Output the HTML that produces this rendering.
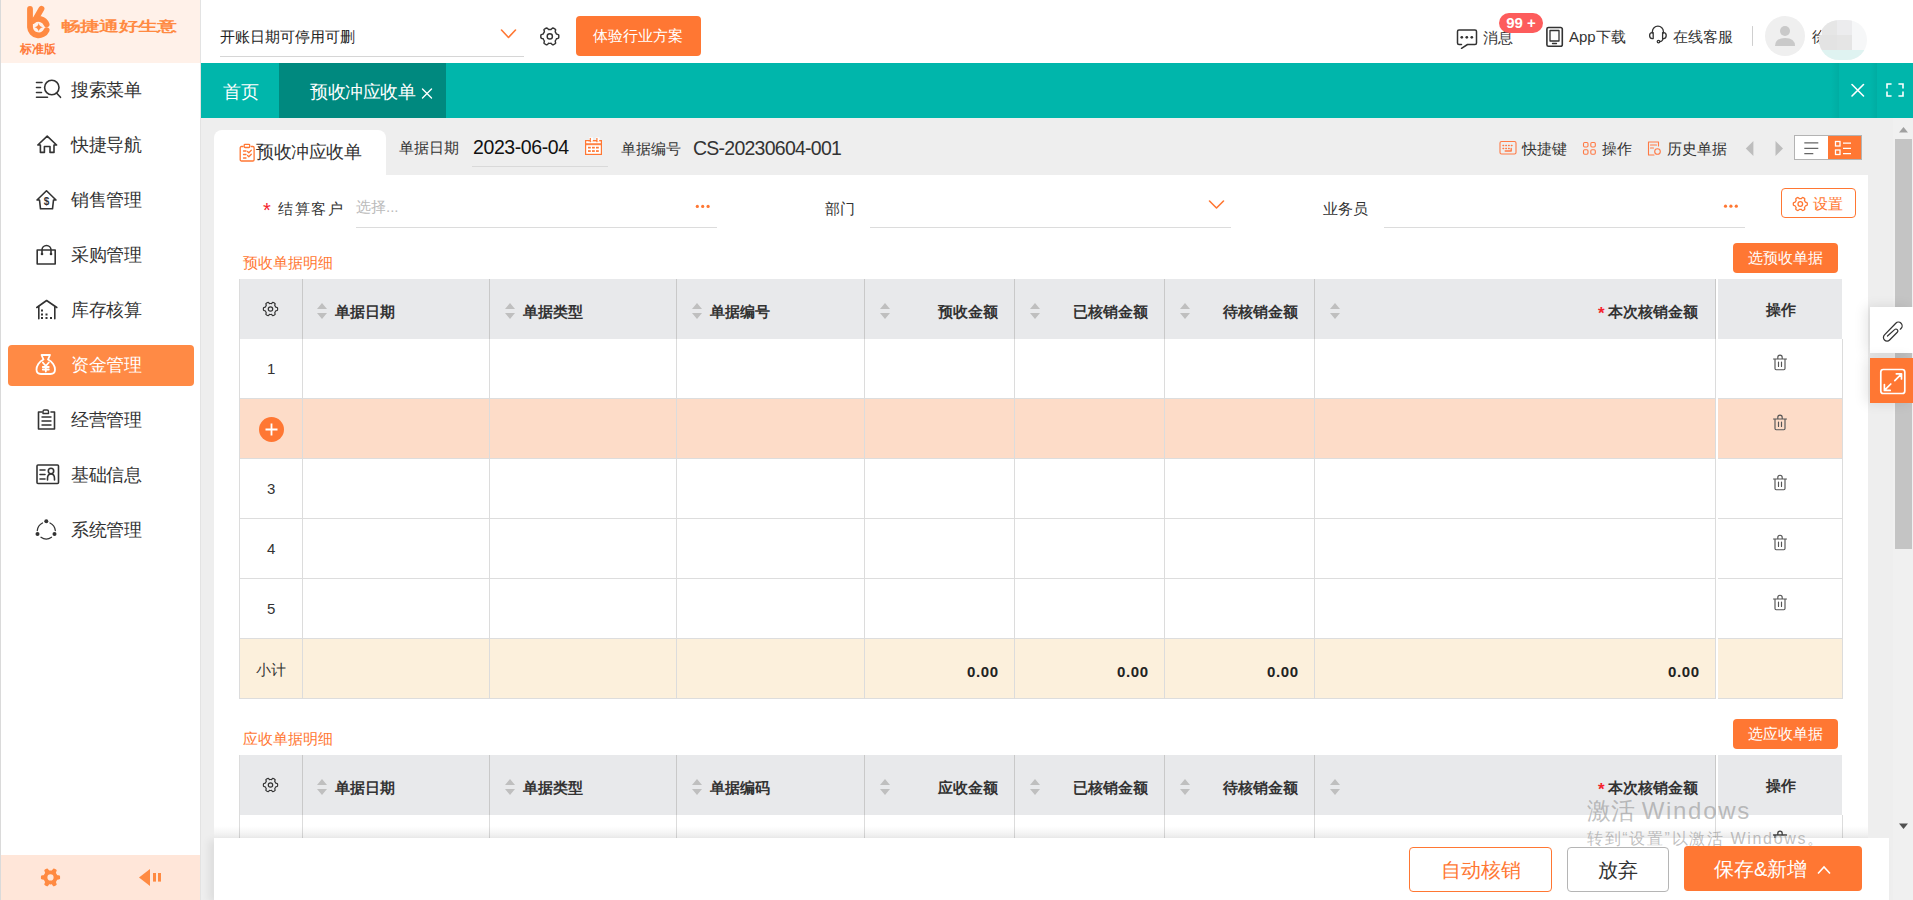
<!DOCTYPE html><html><head><meta charset="utf-8"><style>
*{box-sizing:border-box;margin:0;padding:0}
html,body{width:1913px;height:900px;overflow:hidden}
body{position:relative;background:#eeeeee;font-family:"Liberation Sans",sans-serif;color:#333;}
.a{position:absolute;white-space:nowrap}
svg.i{position:absolute;overflow:visible}
.mi{position:absolute;left:71px;font-size:18px;line-height:20px;color:#333;letter-spacing:-0.5px;white-space:nowrap}
.t15{font-size:15px;line-height:20px}
.th{position:absolute;font-size:15px;line-height:20px;font-weight:bold;color:#333;white-space:nowrap}
.vl{position:absolute;width:1px;background:#dddddd}
.hl{position:absolute;height:1px;background:#dddddd}
</style></head><body>
<div class="a" style="left:0;top:0;width:201px;height:900px;background:#fff;border-right:1px solid #e3e3e3;border-left:1px solid #dadada"></div>
<div class="a" style="left:1px;top:0;width:199px;height:63px;background:#fff1e9"></div>
<svg class="i" style="left:0;top:0" width="200" height="63" viewBox="0 0 200 63" fill="none" stroke="#ff8a42" stroke-width="5.8" stroke-linecap="round" stroke-linejoin="round">
<path d="M30 9 V27.3 A8.7 8.7 0 0 0 46.6 30.2"/>
<path d="M41.5 8.8 L36 18.3"/>
<path d="M32.8 21 A8.7 8.7 0 0 1 46.6 24.4"/>
<path d="M38.7 23 Q39.3 26.7 43 27.3 Q39.3 27.9 38.7 31.6 Q38.1 27.9 34.4 27.3 Q38.1 26.7 38.7 23Z" fill="#ff8a42" stroke="none"/>
</svg>
<div class="a" style="left:61px;top:17px;font-size:15px;line-height:20px;font-weight:bold;color:#ff8a42;transform:scale(1.28,0.9);transform-origin:0 0">畅捷通好生意</div>
<div class="a" style="left:20px;top:41px;font-size:12px;line-height:16px;font-weight:bold;color:#ff7a3a">标准版</div>
<div class="a" style="left:8px;top:345px;width:186px;height:41px;border-radius:4px;background:#ff8a45;overflow:hidden"><div class="a" style="left:-225px;top:-255.6px;width:400px;height:400px;border-radius:200px;background:radial-gradient(circle at center,rgba(255,255,255,0) 82%,rgba(255,255,255,0.22) 100%)"></div></div>
<div class="mi" style="top:80px;color:#333">搜索菜单</div>
<div class="mi" style="top:135px;color:#333">快捷导航</div>
<div class="mi" style="top:190px;color:#333">销售管理</div>
<div class="mi" style="top:245px;color:#333">采购管理</div>
<div class="mi" style="top:300px;color:#333">库存核算</div>
<div class="mi" style="top:355px;color:#fff">资金管理</div>
<div class="mi" style="top:410px;color:#333">经营管理</div>
<div class="mi" style="top:465px;color:#333">基础信息</div>
<div class="mi" style="top:520px;color:#333">系统管理</div>

<svg class="i" style="left:0;top:0" width="200" height="600" viewBox="0 0 200 600" fill="none" stroke="#333" stroke-width="1.6" stroke-linecap="round" stroke-linejoin="round">
 <path d="M36.5 82.5h5.5M36.5 87.5h4M36.5 92.5h5M36.5 97.2h11"/>
 <circle cx="51.8" cy="87.5" r="7.2"/><path d="M56.5 93l4 4.3"/>
 <path d="M37.8 145 L47.2 136.2 L56.6 145 L54 145 L54 152.4 L50 152.4 L50 146.5 L44.4 146.5 L44.4 152.4 L40.4 152.4 L40.4 145 Z"/>
 <path d="M37 200 L46.5 190.8 L56 200 L53.5 200 L52.5 208.8 L40.5 208.8 L39.5 200 Z"/>
 <path d="M37.2 250 h18 v14 h-18 Z"/><path d="M42 254 v-4 a4.5 4.5 0 0 1 9 0 v4"/>
 <path d="M36.8 307.5 L46.6 300.5 L56.8 307.5"/><path d="M38.8 306.5 V318.8 M54.8 306.5 V318.8"/>
 <path d="M42 412 h-3.5 v17 h16 v-17 h-3.5"/><path d="M43 413.5 v-2 q0 -1.5 1.5 -1.5 h2.5 q1.5 0 1.5 1.5 v2 Z" stroke-width="1.4"/><path d="M42 417h9 M42 421h9 M42 425h9" stroke-width="1.4"/>
 <rect x="37" y="465" width="21.5" height="18.5" rx="1"/><path d="M40 470h5M40 474.5h5M40 479h5"/><circle cx="51" cy="471" r="2.7"/><path d="M47.5 480 v-1.5 q0 -4.5 3.5 -4.5 q3.5 0 3.5 4.5 v1.5"/>
 <path d="M42.5 523 A9.5 9.5 0 0 0 37.3 530.5 M50 523 A9.5 9.5 0 0 1 55.3 530.5 M41 537.3 A9.5 9.5 0 0 0 51.5 537.3" stroke-width="1.3"/>
</svg>
<svg class="i" style="left:0;top:0" width="200" height="600" viewBox="0 0 200 600">
<text x="46.5" y="204.5" font-family="Liberation Sans" font-size="10" font-weight="bold" fill="#333" text-anchor="middle">$</text>
<circle cx="42" cy="254" r="1.3" fill="#333"/><circle cx="51" cy="254" r="1.3" fill="#333"/>
<g fill="#333"><rect x="41" y="309.5" width="2" height="2"/><rect x="41" y="313.5" width="2" height="2"/><rect x="45.5" y="313.5" width="2" height="2"/><rect x="41" y="317" width="2" height="2"/><rect x="45.5" y="317" width="2" height="2"/><rect x="50" y="317" width="2" height="2"/></g>
<g fill="#333"><circle cx="46.3" cy="521.2" r="2"/><circle cx="37.5" cy="534" r="2"/><circle cx="54.5" cy="534" r="2"/></g>
</svg>
<svg class="i" style="left:0;top:0" width="200" height="400" viewBox="0 0 200 400" fill="none" stroke="#fff" stroke-width="1.8" stroke-linecap="round" stroke-linejoin="round">
<path d="M41.5 355 h8.5 l-2 4.5 C52.5 361.5 55 366 55 369.5 C55 372.5 53 374 50.5 374 h-9.5 C38.5 374 36.5 372.5 36.5 369.5 C36.5 366 39 361.5 43.5 359.5 Z"/>
<path d="M42.8 362.5 l3 3.5 l3 -3.5 M45.8 366 v5.5 M42.8 367 h6 M42.8 369.5 h6"/>
</svg>
<div class="a" style="left:1px;top:855px;width:199px;height:45px;background:#ffe6d9"></div>
<svg class="i" style="left:0;top:0" width="200" height="900" viewBox="0 0 200 900">
<path fill="#ff8a42" fill-rule="evenodd" d="M60.10 877.40 L60.09 877.82 L60.06 878.24 L60.02 878.65 L59.95 879.07 L59.33 879.36 L58.52 879.55 L57.71 879.67 L57.08 879.79 L56.97 880.08 L56.84 880.36 L56.71 880.63 L56.56 880.90 L56.40 881.16 L56.23 881.42 L56.05 881.66 L55.86 881.90 L56.07 882.51 L56.37 883.27 L56.61 884.07 L56.67 884.75 L56.34 885.02 L56.01 885.26 L55.66 885.50 L55.30 885.71 L54.93 885.92 L54.56 886.10 L54.17 886.27 L53.78 886.42 L53.22 886.02 L52.65 885.42 L52.14 884.78 L51.72 884.29 L51.41 884.34 L51.11 884.37 L50.81 884.39 L50.50 884.40 L50.19 884.39 L49.89 884.37 L49.59 884.34 L49.28 884.29 L48.86 884.78 L48.35 885.42 L47.78 886.02 L47.22 886.42 L46.83 886.27 L46.44 886.10 L46.07 885.92 L45.70 885.71 L45.34 885.50 L44.99 885.26 L44.66 885.02 L44.33 884.75 L44.39 884.07 L44.63 883.27 L44.93 882.51 L45.14 881.90 L44.95 881.66 L44.77 881.42 L44.60 881.16 L44.44 880.90 L44.29 880.63 L44.16 880.36 L44.03 880.08 L43.92 879.79 L43.29 879.67 L42.48 879.55 L41.67 879.36 L41.05 879.07 L40.98 878.65 L40.94 878.24 L40.91 877.82 L40.90 877.40 L40.91 876.98 L40.94 876.56 L40.98 876.15 L41.05 875.73 L41.67 875.44 L42.48 875.25 L43.29 875.13 L43.92 875.01 L44.03 874.72 L44.16 874.44 L44.29 874.17 L44.44 873.90 L44.60 873.64 L44.77 873.38 L44.95 873.14 L45.14 872.90 L44.93 872.29 L44.63 871.53 L44.39 870.73 L44.33 870.05 L44.66 869.78 L44.99 869.54 L45.34 869.30 L45.70 869.09 L46.07 868.88 L46.44 868.70 L46.83 868.53 L47.22 868.38 L47.78 868.78 L48.35 869.38 L48.86 870.02 L49.28 870.51 L49.59 870.46 L49.89 870.43 L50.19 870.41 L50.50 870.40 L50.81 870.41 L51.11 870.43 L51.41 870.46 L51.72 870.51 L52.14 870.02 L52.65 869.38 L53.22 868.78 L53.78 868.38 L54.17 868.53 L54.56 868.70 L54.93 868.88 L55.30 869.09 L55.66 869.30 L56.01 869.54 L56.34 869.78 L56.67 870.05 L56.61 870.73 L56.37 871.53 L56.07 872.29 L55.86 872.90 L56.05 873.14 L56.23 873.38 L56.40 873.64 L56.56 873.90 L56.71 874.17 L56.84 874.44 L56.97 874.72 L57.08 875.01 L57.71 875.13 L58.52 875.25 L59.33 875.44 L59.95 875.73 L60.02 876.15 L60.06 876.56 L60.09 876.98 Z M53.6 877.4 A3.1 3.1 0 1 0 47.4 877.4 A3.1 3.1 0 1 0 53.6 877.4 Z"/>
<path fill="#ff8a42" d="M150 869 V886 L139 877.5 Z"/><rect x="153" y="873" width="3" height="8.6" fill="#ff8a42"/><rect x="158" y="873" width="3" height="8.6" fill="#ff8a42"/>
</svg>
<div class="a" style="left:201px;top:0;width:1712px;height:63px;background:#fff"></div>
<div class="a t15" style="left:220px;top:27px;color:#222">开账日期可停用可删</div>
<div class="a" style="left:220px;top:56px;width:304px;height:1px;background:#d6d6d6"></div>
<svg class="i" style="left:0;top:0" width="800" height="63" viewBox="0 0 800 63" fill="none" stroke-linecap="round" stroke-linejoin="round">
<path d="M501.5 30 L508.5 37.5 L515.5 30" stroke="#ff7733" stroke-width="1.6"/>
</svg>
<svg class="i" style="left:0;top:0" width="800" height="63" viewBox="0 0 800 63">
<path d="M558.80 36.40 L558.79 36.79 L558.77 37.18 L558.72 37.57 L558.66 37.96 L558.12 38.24 L557.53 38.47 L556.94 38.65 L556.38 38.79 L556.27 39.08 L556.14 39.36 L556.01 39.63 L555.86 39.90 L555.70 40.16 L555.53 40.42 L555.35 40.66 L555.16 40.90 L555.32 41.46 L555.46 42.06 L555.55 42.68 L555.59 43.29 L555.28 43.54 L554.96 43.77 L554.64 43.99 L554.30 44.19 L553.96 44.38 L553.60 44.56 L553.24 44.71 L552.88 44.86 L552.36 44.52 L551.87 44.13 L551.42 43.71 L551.02 43.29 L550.71 43.34 L550.41 43.37 L550.11 43.39 L549.80 43.40 L549.49 43.39 L549.19 43.37 L548.89 43.34 L548.58 43.29 L548.18 43.71 L547.73 44.13 L547.24 44.52 L546.72 44.86 L546.36 44.71 L546.00 44.56 L545.64 44.38 L545.30 44.19 L544.96 43.99 L544.64 43.77 L544.32 43.54 L544.01 43.29 L544.05 42.68 L544.14 42.06 L544.28 41.46 L544.44 40.90 L544.25 40.66 L544.07 40.42 L543.90 40.16 L543.74 39.90 L543.59 39.63 L543.46 39.36 L543.33 39.08 L543.22 38.79 L542.66 38.65 L542.07 38.47 L541.48 38.24 L540.94 37.96 L540.88 37.57 L540.83 37.18 L540.81 36.79 L540.80 36.40 L540.81 36.01 L540.83 35.62 L540.88 35.23 L540.94 34.84 L541.48 34.56 L542.07 34.33 L542.66 34.15 L543.22 34.01 L543.33 33.72 L543.46 33.44 L543.59 33.17 L543.74 32.90 L543.90 32.64 L544.07 32.38 L544.25 32.14 L544.44 31.90 L544.28 31.34 L544.14 30.74 L544.05 30.12 L544.01 29.51 L544.32 29.26 L544.64 29.03 L544.96 28.81 L545.30 28.61 L545.64 28.42 L546.00 28.24 L546.36 28.09 L546.72 27.94 L547.24 28.28 L547.73 28.67 L548.18 29.09 L548.58 29.51 L548.89 29.46 L549.19 29.43 L549.49 29.41 L549.80 29.40 L550.11 29.41 L550.41 29.43 L550.71 29.46 L551.02 29.51 L551.42 29.09 L551.87 28.67 L552.36 28.28 L552.88 27.94 L553.24 28.09 L553.60 28.24 L553.96 28.42 L554.30 28.61 L554.64 28.81 L554.96 29.03 L555.28 29.26 L555.59 29.51 L555.55 30.12 L555.46 30.74 L555.32 31.34 L555.16 31.90 L555.35 32.14 L555.53 32.38 L555.70 32.64 L555.86 32.90 L556.01 33.17 L556.14 33.44 L556.27 33.72 L556.38 34.01 L556.94 34.15 L557.53 34.33 L558.12 34.56 L558.66 34.84 L558.72 35.23 L558.77 35.62 L558.79 36.01 Z" fill="none" stroke="#333" stroke-width="1.45" stroke-linejoin="round"/>
<circle cx="549.8" cy="36.4" r="2.6" fill="none" stroke="#333" stroke-width="1.45"/>
</svg>
<div class="a" style="left:576px;top:16px;width:125px;height:40px;border-radius:4px;background:#ff7733"></div>
<div class="a t15" style="left:593px;top:26px;color:#fff">体验行业方案</div>
<svg class="i" style="left:0;top:0" width="1913" height="63" viewBox="0 0 1913 63" fill="none" stroke="#333" stroke-width="1.6" stroke-linecap="round" stroke-linejoin="round">
<path d="M1461.5 44.5 H1459 a1.5 1.5 0 0 1 -1.5 -1.5 V31.5 a1.5 1.5 0 0 1 1.5 -1.5 H1475 a1.5 1.5 0 0 1 1.5 1.5 V43 a1.5 1.5 0 0 1 -1.5 1.5 H1467.5 L1461.5 48.3" stroke-width="1.5"/>
<path d="M1548.5 27.5 h12.2 a1.6 1.6 0 0 1 1.6 1.6 v15.6 a1.6 1.6 0 0 1 -1.6 1.6 h-12.2 a1.6 1.6 0 0 1 -1.6 -1.6 v-15.6 a1.6 1.6 0 0 1 1.6 -1.6 Z"/>
<path d="M1550 30.5 h9 v10.5 h-9 Z" stroke-width="1.3"/><path d="M1552.5 43.5 h4" stroke-width="1.3"/>
<path d="M1652.4 33 V31.6 A5.5 5.5 0 0 1 1663.4 31.6 V33" stroke-width="1.3"/>
<path d="M1653.2 32.6 V38.6 H1652.2 a2.6 3 0 0 1 0 -6 Z" stroke-width="1.3"/><path d="M1662.6 32.6 V38.6 H1663.6 a2.6 3 0 0 0 0 -6 Z" stroke-width="1.3"/>
<path d="M1663 38.8 q-0.6 2.6 -3.2 2.9" stroke-width="1.3"/><circle cx="1658.5" cy="41.6" r="1.3" stroke-width="1.2"/>
<path d="M1752.5 26.5 v19" stroke="#cfcfcf" stroke-width="1"/>
</svg>
<svg class="i" style="left:0;top:0" width="1913" height="63" viewBox="0 0 1913 63" fill="#333">
<circle cx="1461.8" cy="37.3" r="1.35"/><circle cx="1466.8" cy="37.3" r="1.35"/><circle cx="1471.8" cy="37.3" r="1.35"/>

</svg>
<div class="a t15" style="left:1483px;top:28px;color:#333">消息</div>
<div class="a" style="left:1499px;top:13px;width:44px;height:20px;border-radius:10px;background:#fd5c5c;color:#fff;font-size:15px;line-height:20px;font-weight:bold;text-align:center">99 +</div>
<div class="a t15" style="left:1569px;top:27px;color:#333">App下载</div>
<div class="a t15" style="left:1673px;top:27px;color:#333">在线客服</div>
<div class="a" style="left:1765px;top:16px;width:40px;height:40px;border-radius:20px;background:#efefef"></div>
<svg class="i" style="left:0;top:0" width="1913" height="63" viewBox="0 0 1913 63" fill="#c9c9c9">
<circle cx="1785" cy="31" r="5"/><path d="M1775 46 q0 -8 10 -8 q10 0 10 8 Z"/>
</svg>
<div class="a t15" style="left:1812px;top:27px;color:#333">徐</div>
<div class="a" style="left:1819px;top:20px;width:48px;height:40px;border-radius:20px;overflow:hidden;background:#f6f7f8"><div class="a" style="left:3px;top:0;width:15px;height:15px;background:#e6e6e6"></div><div class="a" style="left:18px;top:0;width:15px;height:15px;background:#ececee"></div><div class="a" style="left:0;top:15px;width:18px;height:15px;background:#e3e3e3"></div><div class="a" style="left:18px;top:15px;width:15px;height:15px;background:#e5e5e5"></div><div class="a" style="left:0;top:30px;width:48px;height:10px;background:#dff3f1"></div></div>
<div class="a" style="left:201px;top:63px;width:1712px;height:55px;background:#00b6ab"></div>
<div class="a" style="left:279px;top:63px;width:167px;height:55px;background:#00897f"></div>
<div class="a" style="left:1831px;top:63px;width:8px;height:55px;background:linear-gradient(to right,rgba(0,0,0,0),rgba(0,0,0,0.05))"></div>
<div class="a" style="left:1870px;top:63px;width:7px;height:55px;background:linear-gradient(to right,rgba(0,0,0,0),rgba(0,0,0,0.05))"></div>
<div class="mi" style="left:223px;top:82px;color:#fff">首页</div>
<div class="mi" style="left:310px;top:82px;color:#fff">预收冲应收单</div>
<svg class="i" style="left:0;top:0" width="1913" height="130" viewBox="0 0 1913 130" fill="none" stroke="#fff" stroke-linecap="round">
<path d="M422.5 89 l9 9 M431.5 89 l-9 9" stroke-width="1.4"/>
<path d="M1852 84.5 l11.5 11.5 M1863.5 84.5 l-11.5 11.5" stroke-width="1.6"/>
<path d="M1887 88 v-4 h4 M1899 84 h4 v4 M1903 92 v4 h-4 M1891 96 h-4 v-4" stroke-width="1.6"/>
</svg>
<div class="a" style="left:214px;top:175px;width:1654px;height:725px;background:#fff"></div>
<div class="a" style="left:214px;top:130px;width:172px;height:46px;background:#fff;border-radius:8px 8px 0 0"></div>
<div class="mi" style="left:256px;top:142px;color:#333">预收冲应收单</div>
<svg class="i" style="left:0;top:0" width="1913" height="200" viewBox="0 0 1913 200" fill="none" stroke="#ff7733" stroke-width="1.3" stroke-linecap="round" stroke-linejoin="round">
<path d="M243 146.5 h-1.5 a1.3 1.3 0 0 0 -1.3 1.3 v11.9 a1.3 1.3 0 0 0 1.3 1.3 h11.3 a1.3 1.3 0 0 0 1.3 -1.3 v-11.9 a1.3 1.3 0 0 0 -1.3 -1.3 h-1.5"/>
<rect x="244.2" y="144.3" width="5.5" height="3.2" rx="0.8"/>
<path d="M243.5 151h2.5 M243.5 154.5h2.5 M243.5 158h2.5 M247.5 151.5 l1.3 1.2 l2.5 -2.5 M247.5 155.5 l1.3 1.2 l2.5 -2.5"/>
</svg>
<div class="a t15" style="left:399px;top:138px;color:#333">单据日期</div>
<div class="a" style="left:473px;top:136px;font-size:19.5px;line-height:22px;color:#111;letter-spacing:-0.4px">2023-06-04</div>
<div class="a" style="left:472px;top:166px;width:136px;height:1px;background:#d9d9d9"></div>
<svg class="i" style="left:0;top:0" width="1913" height="200" viewBox="0 0 1913 200">
<rect x="585.6" y="140.6" width="15.8" height="13.8" fill="#fff" stroke="#ff7733" stroke-width="1.2"/>
<rect x="586" y="143.2" width="15" height="2" fill="#ff7733" opacity="0.9"/>
<rect x="589" y="137.5" width="4" height="3.6" fill="#fff"/><rect x="595.6" y="137.5" width="4" height="3.6" fill="#fff"/>
<path d="M590.3 138 v4.2 M596.9 138 v4.2 M588 140.6 h2.3 M592.8 140.6 h4 M599.3 140.6 h2" stroke="#ff7733" stroke-width="1.2" fill="none"/>
<g fill="#ff7733"><rect x="588" y="146.8" width="2.8" height="1.7"/><rect x="592" y="146.8" width="2.8" height="1.7"/><rect x="596" y="146.8" width="2.8" height="1.7"/>
<rect x="588" y="150.2" width="2.8" height="1.7"/><rect x="592" y="150.2" width="2.8" height="1.7"/><rect x="596" y="150.2" width="2.8" height="1.7"/></g>
</svg>
<div class="a t15" style="left:621px;top:139px;color:#333">单据编号</div>
<div class="a" style="left:693px;top:137px;font-size:19.5px;line-height:22px;color:#333;letter-spacing:-0.75px">CS-20230604-001</div>
<svg class="i" style="left:0;top:0" width="1913" height="200" viewBox="0 0 1913 200" fill="none" stroke="#ff7a45" stroke-width="1.1" stroke-linecap="round" stroke-linejoin="round">
<rect x="1500" y="141.5" width="16" height="12.5" rx="1.5"/>
<path d="M1503 145.5h0.6 M1505.8 145.5h0.6 M1508.6 145.5h0.6 M1511.4 145.5h0.6 M1503 148.5h0.6 M1505.8 148.5h0.6 M1508.6 148.5h0.6 M1511.2 148.5 v2.5 h-6" stroke-width="1.4"/>
<rect x="1583.5" y="142.5" width="4.5" height="4.5" rx="1.2"/><rect x="1590.8" y="142.5" width="4.5" height="4.5" rx="1.2"/>
<rect x="1583.5" y="149.8" width="4.5" height="4.5" rx="1.2"/><rect x="1590.8" y="149.8" width="4.5" height="4.5" rx="1.2"/>
<path d="M1658.5 146 V142 h-10 v13 h5.5"/><path d="M1650.5 145h6 M1650.5 148h3" />
<circle cx="1657.5" cy="151.5" r="2.8"/>
</svg>
<div class="a t15" style="left:1522px;top:139px;color:#333">快捷键</div>
<div class="a t15" style="left:1602px;top:139px;color:#333">操作</div>
<div class="a t15" style="left:1667px;top:139px;color:#333">历史单据</div>
<svg class="i" style="left:0;top:0" width="1913" height="200" viewBox="0 0 1913 200">
<path d="M1753.4 141 V156 L1745.8 148.5 Z" fill="#bdbdbd"/>
<path d="M1775.5 141 V156 L1783 148.5 Z" fill="#bdbdbd"/>
</svg>
<div class="a" style="left:1794px;top:135px;width:68px;height:25px;border:1px solid #b3b3b3;background:#fff"></div>
<div class="a" style="left:1828px;top:136px;width:33px;height:23px;background:#ff7733"></div>
<svg class="i" style="left:0;top:0" width="1913" height="200" viewBox="0 0 1913 200" fill="none" stroke-linecap="butt">
<path d="M1804.3 142.8h14 M1804.3 148.3h14 M1804.3 153.7h9" stroke="#666" stroke-width="1.2"/>
<rect x="1835.5" y="141.5" width="4.5" height="4.5" stroke="#fff" stroke-width="1.3"/>
<rect x="1835.5" y="150" width="4.5" height="4.5" stroke="#fff" stroke-width="1.3"/>
<path d="M1843 143.2h8 M1843 148.3h8 M1843 153.7h8" stroke="#fff" stroke-width="1.3"/>
</svg>
<div class="a" style="left:263px;top:200px;font-size:20px;line-height:20px;color:#f5222d">*</div>
<div class="a t15" style="left:278px;top:199px;color:#333;letter-spacing:1.5px">结算客户</div>
<div class="a t15" style="left:356px;top:197px;color:#bbbbbb">选择...</div>
<div class="a" style="left:356px;top:227px;width:361px;height:1px;background:#dcdcdc"></div>
<div class="a t15" style="left:825px;top:199px;color:#333">部门</div>
<div class="a" style="left:870px;top:227px;width:361px;height:1px;background:#dcdcdc"></div>
<div class="a t15" style="left:1323px;top:199px;color:#333">业务员</div>
<div class="a" style="left:1384px;top:227px;width:361px;height:1px;background:#dcdcdc"></div>
<svg class="i" style="left:0;top:0" width="1913" height="300" viewBox="0 0 1913 300">
<g fill="#ff7733"><circle cx="697.3" cy="206.4" r="1.6"/><circle cx="702.7" cy="206.4" r="1.6"/><circle cx="708.1" cy="206.4" r="1.6"/>
<circle cx="1725.5" cy="206.2" r="1.6"/><circle cx="1730.9" cy="206.2" r="1.6"/><circle cx="1736.3" cy="206.2" r="1.6"/></g>
<path d="M1209.5 201 L1216.5 208 L1223.5 201" fill="none" stroke="#ff7733" stroke-width="1.6" stroke-linecap="round" stroke-linejoin="round"/>
</svg>
<div class="a" style="left:1781px;top:188px;width:75px;height:30px;border:1px solid #ff7733;border-radius:4px;background:#fff"></div>
<div class="a t15" style="left:1813px;top:194px;color:#ff7733">设置</div>
<svg class="i" style="left:0;top:0" width="1913" height="300" viewBox="0 0 1913 300" fill="none" stroke="#ff7733" stroke-width="1.3" stroke-linejoin="round">
<path d="M1807.30 204.00 L1807.29 204.31 L1807.27 204.61 L1807.24 204.91 L1807.19 205.22 L1806.76 205.43 L1806.29 205.60 L1805.82 205.74 L1805.37 205.85 L1805.29 206.07 L1805.19 206.28 L1805.09 206.49 L1804.98 206.70 L1804.85 206.90 L1804.72 207.10 L1804.58 207.29 L1804.44 207.47 L1804.57 207.91 L1804.68 208.38 L1804.77 208.88 L1804.80 209.36 L1804.56 209.55 L1804.32 209.73 L1804.06 209.90 L1803.80 210.06 L1803.53 210.21 L1803.26 210.34 L1802.98 210.47 L1802.69 210.58 L1802.29 210.31 L1801.90 209.99 L1801.55 209.65 L1801.24 209.32 L1801.00 209.35 L1800.77 209.38 L1800.54 209.39 L1800.30 209.40 L1800.06 209.39 L1799.83 209.38 L1799.60 209.35 L1799.36 209.32 L1799.05 209.65 L1798.70 209.99 L1798.31 210.31 L1797.91 210.58 L1797.62 210.47 L1797.34 210.34 L1797.07 210.21 L1796.80 210.06 L1796.54 209.90 L1796.28 209.73 L1796.04 209.55 L1795.80 209.36 L1795.83 208.88 L1795.92 208.38 L1796.03 207.91 L1796.16 207.47 L1796.02 207.29 L1795.88 207.10 L1795.75 206.90 L1795.62 206.70 L1795.51 206.49 L1795.41 206.28 L1795.31 206.07 L1795.23 205.85 L1794.78 205.74 L1794.31 205.60 L1793.84 205.43 L1793.41 205.22 L1793.36 204.91 L1793.33 204.61 L1793.31 204.31 L1793.30 204.00 L1793.31 203.69 L1793.33 203.39 L1793.36 203.09 L1793.41 202.78 L1793.84 202.57 L1794.31 202.40 L1794.78 202.26 L1795.23 202.15 L1795.31 201.93 L1795.41 201.72 L1795.51 201.51 L1795.62 201.30 L1795.75 201.10 L1795.88 200.90 L1796.02 200.71 L1796.16 200.53 L1796.03 200.09 L1795.92 199.62 L1795.83 199.12 L1795.80 198.64 L1796.04 198.45 L1796.28 198.27 L1796.54 198.10 L1796.80 197.94 L1797.07 197.79 L1797.34 197.66 L1797.62 197.53 L1797.91 197.42 L1798.31 197.69 L1798.70 198.01 L1799.05 198.35 L1799.36 198.68 L1799.60 198.65 L1799.83 198.62 L1800.06 198.61 L1800.30 198.60 L1800.54 198.61 L1800.77 198.62 L1801.00 198.65 L1801.24 198.68 L1801.55 198.35 L1801.90 198.01 L1802.29 197.69 L1802.69 197.42 L1802.98 197.53 L1803.26 197.66 L1803.53 197.79 L1803.80 197.94 L1804.06 198.10 L1804.32 198.27 L1804.56 198.45 L1804.80 198.64 L1804.77 199.12 L1804.68 199.62 L1804.57 200.09 L1804.44 200.53 L1804.58 200.71 L1804.72 200.90 L1804.85 201.10 L1804.98 201.30 L1805.09 201.51 L1805.19 201.72 L1805.29 201.93 L1805.37 202.15 L1805.82 202.26 L1806.29 202.40 L1806.76 202.57 L1807.19 202.78 L1807.24 203.09 L1807.27 203.39 L1807.29 203.69 Z"/><circle cx="1800.3" cy="204" r="2.3"/>
</svg>
<div class="a t15" style="left:243px;top:253px;color:#ff7733">预收单据明细</div>
<div class="a" style="left:1733px;top:243px;width:105px;height:30px;border-radius:4px;background:#ff7733"></div>
<div class="a t15" style="left:1748px;top:248px;color:#fff">选预收单据</div>
<div class="a" style="left:239px;top:279px;width:1476px;height:60px;background:#e8e9eb"></div>
<div class="a" style="left:1718px;top:279px;width:124px;height:60px;background:#e8e9eb"></div>
<div class="a" style="left:239px;top:339px;width:1477px;height:60px;background:#fff;border-bottom:1px solid #dddddd"></div>
<div class="a" style="left:1718px;top:339px;width:124px;height:60px;background:#fff;border-bottom:1px solid #dddddd"></div>
<div class="a" style="left:239px;top:399px;width:1477px;height:60px;background:#fddcc8;border-bottom:1px solid #dddddd"></div>
<div class="a" style="left:1718px;top:399px;width:124px;height:60px;background:#fddcc8;border-bottom:1px solid #dddddd"></div>
<div class="a" style="left:239px;top:459px;width:1477px;height:60px;background:#fff;border-bottom:1px solid #dddddd"></div>
<div class="a" style="left:1718px;top:459px;width:124px;height:60px;background:#fff;border-bottom:1px solid #dddddd"></div>
<div class="a" style="left:239px;top:519px;width:1477px;height:60px;background:#fff;border-bottom:1px solid #dddddd"></div>
<div class="a" style="left:1718px;top:519px;width:124px;height:60px;background:#fff;border-bottom:1px solid #dddddd"></div>
<div class="a" style="left:239px;top:579px;width:1477px;height:60px;background:#fff;border-bottom:1px solid #dddddd"></div>
<div class="a" style="left:1718px;top:579px;width:124px;height:60px;background:#fff;border-bottom:1px solid #dddddd"></div>
<div class="a" style="left:239px;top:639px;width:1477px;height:60px;background:#fcf0dc;border-bottom:1px solid #dddddd"></div>
<div class="a" style="left:1718px;top:639px;width:124px;height:60px;background:#fcf0dc;border-bottom:1px solid #dddddd"></div>
<div class="vl" style="left:239px;top:279px;height:420px;background:#dcdcdc"></div>
<div class="vl" style="left:302px;top:279px;height:420px;background:#dcdcdc"></div>
<div class="vl" style="left:489px;top:279px;height:420px;background:#dcdcdc"></div>
<div class="vl" style="left:676px;top:279px;height:420px;background:#dcdcdc"></div>
<div class="vl" style="left:864px;top:279px;height:420px;background:#dcdcdc"></div>
<div class="vl" style="left:1014px;top:279px;height:420px;background:#dcdcdc"></div>
<div class="vl" style="left:1164px;top:279px;height:420px;background:#dcdcdc"></div>
<div class="vl" style="left:1314px;top:279px;height:420px;background:#dcdcdc"></div>
<div class="vl" style="left:1715px;top:279px;height:420px;background:#dcdcdc"></div>
<div class="vl" style="left:1842px;top:339px;height:360px;background:#dcdcdc"></div>
<div class="vl" style="left:302px;top:279px;height:60px;background:#c9c9c9"></div>
<div class="vl" style="left:489px;top:279px;height:60px;background:#c9c9c9"></div>
<div class="vl" style="left:676px;top:279px;height:60px;background:#c9c9c9"></div>
<div class="vl" style="left:864px;top:279px;height:60px;background:#c9c9c9"></div>
<div class="vl" style="left:1014px;top:279px;height:60px;background:#c9c9c9"></div>
<div class="vl" style="left:1164px;top:279px;height:60px;background:#c9c9c9"></div>
<div class="vl" style="left:1314px;top:279px;height:60px;background:#c9c9c9"></div>
<div class="vl" style="left:1715px;top:279px;height:60px;background:#c9c9c9"></div>
<div class="th" style="left:335px;top:302px">单据日期</div>
<div class="th" style="left:523px;top:302px">单据类型</div>
<div class="th" style="left:710px;top:302px">单据编号</div>
<div class="th" style="right:915px;top:302px">预收金额</div>
<div class="th" style="right:765px;top:302px">已核销金额</div>
<div class="th" style="right:615px;top:302px">待核销金额</div>
<div class="th" style="right:215px;top:302px">本次核销金额</div>
<div class="a" style="left:1598px;top:304px;font-size:17px;line-height:20px;font-weight:bold;color:#f5222d">*</div>
<div class="th" style="left:1766px;top:300px">操作</div>
<svg class="i" style="left:0;top:0" width="1913" height="900" viewBox="0 0 1913 900"><path d="M317 309 L322 303 L327 309 Z M317 313 L322 319 L327 313 Z" fill="#bfbfbf"/><path d="M505 309 L510 303 L515 309 Z M505 313 L510 319 L515 313 Z" fill="#bfbfbf"/><path d="M692 309 L697 303 L702 309 Z M692 313 L697 319 L702 313 Z" fill="#bfbfbf"/><path d="M880 309 L885 303 L890 309 Z M880 313 L885 319 L890 313 Z" fill="#bfbfbf"/><path d="M1030 309 L1035 303 L1040 309 Z M1030 313 L1035 319 L1040 313 Z" fill="#bfbfbf"/><path d="M1180 309 L1185 303 L1190 309 Z M1180 313 L1185 319 L1190 313 Z" fill="#bfbfbf"/><path d="M1330 309 L1335 303 L1340 309 Z M1330 313 L1335 319 L1340 313 Z" fill="#bfbfbf"/><path d="M277.60 309.00 L277.59 309.31 L277.57 309.62 L277.54 309.93 L277.49 310.23 L277.05 310.45 L276.59 310.63 L276.11 310.77 L275.67 310.88 L275.58 311.10 L275.48 311.32 L275.38 311.54 L275.26 311.75 L275.14 311.96 L275.01 312.15 L274.86 312.35 L274.71 312.54 L274.84 312.98 L274.95 313.45 L275.04 313.95 L275.06 314.44 L274.82 314.63 L274.57 314.82 L274.31 314.99 L274.05 315.15 L273.78 315.30 L273.50 315.43 L273.22 315.56 L272.93 315.67 L272.52 315.40 L272.13 315.09 L271.77 314.75 L271.46 314.42 L271.22 314.45 L270.98 314.48 L270.74 314.49 L270.50 314.50 L270.26 314.49 L270.02 314.48 L269.78 314.45 L269.54 314.42 L269.23 314.75 L268.87 315.09 L268.48 315.40 L268.07 315.67 L267.78 315.56 L267.50 315.43 L267.22 315.30 L266.95 315.15 L266.69 314.99 L266.43 314.82 L266.18 314.63 L265.94 314.44 L265.96 313.95 L266.05 313.45 L266.16 312.98 L266.29 312.54 L266.14 312.35 L265.99 312.15 L265.86 311.96 L265.74 311.75 L265.62 311.54 L265.52 311.32 L265.42 311.10 L265.33 310.88 L264.89 310.77 L264.41 310.63 L263.95 310.45 L263.51 310.23 L263.46 309.93 L263.43 309.62 L263.41 309.31 L263.40 309.00 L263.41 308.69 L263.43 308.38 L263.46 308.07 L263.51 307.77 L263.95 307.55 L264.41 307.37 L264.89 307.23 L265.33 307.12 L265.42 306.90 L265.52 306.68 L265.62 306.46 L265.74 306.25 L265.86 306.04 L265.99 305.85 L266.14 305.65 L266.29 305.46 L266.16 305.02 L266.05 304.55 L265.96 304.05 L265.94 303.56 L266.18 303.37 L266.43 303.18 L266.69 303.01 L266.95 302.85 L267.22 302.70 L267.50 302.57 L267.78 302.44 L268.07 302.33 L268.48 302.60 L268.87 302.91 L269.23 303.25 L269.54 303.58 L269.78 303.55 L270.02 303.52 L270.26 303.51 L270.50 303.50 L270.74 303.51 L270.98 303.52 L271.22 303.55 L271.46 303.58 L271.77 303.25 L272.13 302.91 L272.52 302.60 L272.93 302.33 L273.22 302.44 L273.50 302.57 L273.78 302.70 L274.05 302.85 L274.31 303.01 L274.57 303.18 L274.82 303.37 L275.06 303.56 L275.04 304.05 L274.95 304.55 L274.84 305.02 L274.71 305.46 L274.86 305.65 L275.01 305.85 L275.14 306.04 L275.26 306.25 L275.38 306.46 L275.48 306.68 L275.58 306.90 L275.67 307.12 L276.11 307.23 L276.59 307.37 L277.05 307.55 L277.49 307.77 L277.54 308.07 L277.57 308.38 L277.59 308.69 Z" fill="none" stroke="#333" stroke-width="1.2" stroke-linejoin="round"/><circle cx="270.5" cy="309" r="2.2" fill="none" stroke="#333" stroke-width="1.2"/></svg>
<div class="a" style="left:267px;top:359px;font-size:15px;line-height:20px;color:#333">1</div>
<div class="a" style="left:267px;top:479px;font-size:15px;line-height:20px;color:#333">3</div>
<div class="a" style="left:267px;top:539px;font-size:15px;line-height:20px;color:#333">4</div>
<div class="a" style="left:267px;top:599px;font-size:15px;line-height:20px;color:#333">5</div>
<div class="a" style="left:259px;top:417px;width:25px;height:25px;border-radius:13px;background:#ff7733"></div>
<svg class="i" style="left:0;top:0" width="1913" height="900" viewBox="0 0 1913 900"><path d="M271.5 423.5 v12 M265.5 429.5 h12" stroke="#fff" stroke-width="1.8"/></svg>
<div class="a t15" style="left:256px;top:660px;color:#333">小计</div>
<div class="a" style="right:914.4px;top:662px;font-size:15px;line-height:20px;font-weight:bold;color:#222;letter-spacing:0.6px">0.00</div>
<div class="a" style="right:764.4px;top:662px;font-size:15px;line-height:20px;font-weight:bold;color:#222;letter-spacing:0.6px">0.00</div>
<div class="a" style="right:614.4px;top:662px;font-size:15px;line-height:20px;font-weight:bold;color:#222;letter-spacing:0.6px">0.00</div>
<div class="a" style="right:213.4px;top:662px;font-size:15px;line-height:20px;font-weight:bold;color:#222;letter-spacing:0.6px">0.00</div>
<svg class="i" style="left:0;top:0" width="1913" height="900" viewBox="0 0 1913 900"><path d="M1775 359 v9.5 a1.2 1.2 0 0 0 1.2 1.2 h7.6 a1.2 1.2 0 0 0 1.2 -1.2 v-9.5 M1773.5 359 h13 M1777.8 359 v-1.6 a1.6 1.6 0 0 1 4.4 0 v1.6 M1778.5 362 v4.5 M1781.5 362 v4.5" fill="none" stroke="#555" stroke-width="1.15" stroke-linecap="round"/><path d="M1775 419 v9.5 a1.2 1.2 0 0 0 1.2 1.2 h7.6 a1.2 1.2 0 0 0 1.2 -1.2 v-9.5 M1773.5 419 h13 M1777.8 419 v-1.6 a1.6 1.6 0 0 1 4.4 0 v1.6 M1778.5 422 v4.5 M1781.5 422 v4.5" fill="none" stroke="#555" stroke-width="1.15" stroke-linecap="round"/><path d="M1775 479 v9.5 a1.2 1.2 0 0 0 1.2 1.2 h7.6 a1.2 1.2 0 0 0 1.2 -1.2 v-9.5 M1773.5 479 h13 M1777.8 479 v-1.6 a1.6 1.6 0 0 1 4.4 0 v1.6 M1778.5 482 v4.5 M1781.5 482 v4.5" fill="none" stroke="#555" stroke-width="1.15" stroke-linecap="round"/><path d="M1775 539 v9.5 a1.2 1.2 0 0 0 1.2 1.2 h7.6 a1.2 1.2 0 0 0 1.2 -1.2 v-9.5 M1773.5 539 h13 M1777.8 539 v-1.6 a1.6 1.6 0 0 1 4.4 0 v1.6 M1778.5 542 v4.5 M1781.5 542 v4.5" fill="none" stroke="#555" stroke-width="1.15" stroke-linecap="round"/><path d="M1775 599 v9.5 a1.2 1.2 0 0 0 1.2 1.2 h7.6 a1.2 1.2 0 0 0 1.2 -1.2 v-9.5 M1773.5 599 h13 M1777.8 599 v-1.6 a1.6 1.6 0 0 1 4.4 0 v1.6 M1778.5 602 v4.5 M1781.5 602 v4.5" fill="none" stroke="#555" stroke-width="1.15" stroke-linecap="round"/></svg>
<div class="a t15" style="left:243px;top:729px;color:#ff7733">应收单据明细</div>
<div class="a" style="left:1733px;top:719px;width:105px;height:30px;border-radius:4px;background:#ff7733"></div>
<div class="a t15" style="left:1748px;top:724px;color:#fff">选应收单据</div>
<div class="a" style="left:239px;top:755px;width:1476px;height:60px;background:#e8e9eb"></div>
<div class="a" style="left:1718px;top:755px;width:124px;height:60px;background:#e8e9eb"></div>
<div class="a" style="left:239px;top:815px;width:1477px;height:60px;background:#fff;border-bottom:1px solid #dddddd"></div>
<div class="a" style="left:1718px;top:815px;width:124px;height:60px;background:#fff;border-bottom:1px solid #dddddd"></div>
<div class="vl" style="left:239px;top:755px;height:120px;background:#dcdcdc"></div>
<div class="vl" style="left:302px;top:755px;height:120px;background:#dcdcdc"></div>
<div class="vl" style="left:489px;top:755px;height:120px;background:#dcdcdc"></div>
<div class="vl" style="left:676px;top:755px;height:120px;background:#dcdcdc"></div>
<div class="vl" style="left:864px;top:755px;height:120px;background:#dcdcdc"></div>
<div class="vl" style="left:1014px;top:755px;height:120px;background:#dcdcdc"></div>
<div class="vl" style="left:1164px;top:755px;height:120px;background:#dcdcdc"></div>
<div class="vl" style="left:1314px;top:755px;height:120px;background:#dcdcdc"></div>
<div class="vl" style="left:1715px;top:755px;height:120px;background:#dcdcdc"></div>
<div class="vl" style="left:1842px;top:815px;height:60px;background:#dcdcdc"></div>
<div class="vl" style="left:302px;top:755px;height:60px;background:#c9c9c9"></div>
<div class="vl" style="left:489px;top:755px;height:60px;background:#c9c9c9"></div>
<div class="vl" style="left:676px;top:755px;height:60px;background:#c9c9c9"></div>
<div class="vl" style="left:864px;top:755px;height:60px;background:#c9c9c9"></div>
<div class="vl" style="left:1014px;top:755px;height:60px;background:#c9c9c9"></div>
<div class="vl" style="left:1164px;top:755px;height:60px;background:#c9c9c9"></div>
<div class="vl" style="left:1314px;top:755px;height:60px;background:#c9c9c9"></div>
<div class="vl" style="left:1715px;top:755px;height:60px;background:#c9c9c9"></div>
<div class="th" style="left:335px;top:778px">单据日期</div>
<div class="th" style="left:523px;top:778px">单据类型</div>
<div class="th" style="left:710px;top:778px">单据编码</div>
<div class="th" style="right:915px;top:778px">应收金额</div>
<div class="th" style="right:765px;top:778px">已核销金额</div>
<div class="th" style="right:615px;top:778px">待核销金额</div>
<div class="th" style="right:215px;top:778px">本次核销金额</div>
<div class="a" style="left:1598px;top:780px;font-size:17px;line-height:20px;font-weight:bold;color:#f5222d">*</div>
<div class="th" style="left:1766px;top:776px">操作</div>
<svg class="i" style="left:0;top:0" width="1913" height="900" viewBox="0 0 1913 900"><path d="M317 785 L322 779 L327 785 Z M317 789 L322 795 L327 789 Z" fill="#bfbfbf"/><path d="M505 785 L510 779 L515 785 Z M505 789 L510 795 L515 789 Z" fill="#bfbfbf"/><path d="M692 785 L697 779 L702 785 Z M692 789 L697 795 L702 789 Z" fill="#bfbfbf"/><path d="M880 785 L885 779 L890 785 Z M880 789 L885 795 L890 789 Z" fill="#bfbfbf"/><path d="M1030 785 L1035 779 L1040 785 Z M1030 789 L1035 795 L1040 789 Z" fill="#bfbfbf"/><path d="M1180 785 L1185 779 L1190 785 Z M1180 789 L1185 795 L1190 789 Z" fill="#bfbfbf"/><path d="M1330 785 L1335 779 L1340 785 Z M1330 789 L1335 795 L1340 789 Z" fill="#bfbfbf"/><path d="M277.60 785.00 L277.59 785.31 L277.57 785.62 L277.54 785.93 L277.49 786.23 L277.05 786.45 L276.59 786.63 L276.11 786.77 L275.67 786.88 L275.58 787.10 L275.48 787.32 L275.38 787.54 L275.26 787.75 L275.14 787.96 L275.01 788.15 L274.86 788.35 L274.71 788.54 L274.84 788.98 L274.95 789.45 L275.04 789.95 L275.06 790.44 L274.82 790.63 L274.57 790.82 L274.31 790.99 L274.05 791.15 L273.78 791.30 L273.50 791.43 L273.22 791.56 L272.93 791.67 L272.52 791.40 L272.13 791.09 L271.77 790.75 L271.46 790.42 L271.22 790.45 L270.98 790.48 L270.74 790.49 L270.50 790.50 L270.26 790.49 L270.02 790.48 L269.78 790.45 L269.54 790.42 L269.23 790.75 L268.87 791.09 L268.48 791.40 L268.07 791.67 L267.78 791.56 L267.50 791.43 L267.22 791.30 L266.95 791.15 L266.69 790.99 L266.43 790.82 L266.18 790.63 L265.94 790.44 L265.96 789.95 L266.05 789.45 L266.16 788.98 L266.29 788.54 L266.14 788.35 L265.99 788.15 L265.86 787.96 L265.74 787.75 L265.62 787.54 L265.52 787.32 L265.42 787.10 L265.33 786.88 L264.89 786.77 L264.41 786.63 L263.95 786.45 L263.51 786.23 L263.46 785.93 L263.43 785.62 L263.41 785.31 L263.40 785.00 L263.41 784.69 L263.43 784.38 L263.46 784.07 L263.51 783.77 L263.95 783.55 L264.41 783.37 L264.89 783.23 L265.33 783.12 L265.42 782.90 L265.52 782.68 L265.62 782.46 L265.74 782.25 L265.86 782.04 L265.99 781.85 L266.14 781.65 L266.29 781.46 L266.16 781.02 L266.05 780.55 L265.96 780.05 L265.94 779.56 L266.18 779.37 L266.43 779.18 L266.69 779.01 L266.95 778.85 L267.22 778.70 L267.50 778.57 L267.78 778.44 L268.07 778.33 L268.48 778.60 L268.87 778.91 L269.23 779.25 L269.54 779.58 L269.78 779.55 L270.02 779.52 L270.26 779.51 L270.50 779.50 L270.74 779.51 L270.98 779.52 L271.22 779.55 L271.46 779.58 L271.77 779.25 L272.13 778.91 L272.52 778.60 L272.93 778.33 L273.22 778.44 L273.50 778.57 L273.78 778.70 L274.05 778.85 L274.31 779.01 L274.57 779.18 L274.82 779.37 L275.06 779.56 L275.04 780.05 L274.95 780.55 L274.84 781.02 L274.71 781.46 L274.86 781.65 L275.01 781.85 L275.14 782.04 L275.26 782.25 L275.38 782.46 L275.48 782.68 L275.58 782.90 L275.67 783.12 L276.11 783.23 L276.59 783.37 L277.05 783.55 L277.49 783.77 L277.54 784.07 L277.57 784.38 L277.59 784.69 Z" fill="none" stroke="#333" stroke-width="1.2" stroke-linejoin="round"/><circle cx="270.5" cy="785" r="2.2" fill="none" stroke="#333" stroke-width="1.2"/></svg>
<svg class="i" style="left:0;top:0" width="1913" height="900" viewBox="0 0 1913 900"><path d="M1775 835 v9.5 M1773.5 835 h13 M1777.8 835 v-1.6 a1.6 1.6 0 0 1 4.4 0 v1.6" fill="none" stroke="#444" stroke-width="1.3" stroke-linecap="round"/></svg>
<div class="a" style="left:214px;top:826px;width:1675px;height:12px;background:linear-gradient(to bottom,rgba(0,0,0,0),rgba(0,0,0,0.07))"></div>
<div class="a" style="left:214px;top:838px;width:1675px;height:62px;background:#fff;box-shadow:-5px 2px 8px rgba(0,0,0,0.07)"></div>
<div class="a" style="left:1409px;top:847px;width:143px;height:45px;border:1px solid #ff7733;border-radius:4px;background:#fff"></div>
<div class="a" style="left:1441px;top:858px;font-size:20px;line-height:24px;color:#ff7733">自动核销</div>
<div class="a" style="left:1567px;top:847px;width:102px;height:45px;border:1px solid #b5b5b5;border-radius:4px;background:#fff"></div>
<div class="a" style="left:1598px;top:858px;font-size:20px;line-height:24px;color:#333">放弃</div>
<div class="a" style="left:1684px;top:846px;width:178px;height:45px;border-radius:4px;background:#ff7733"></div>
<div class="a" style="left:1714px;top:857px;font-size:20px;line-height:24px;color:#fff">保存&amp;新增</div>
<svg class="i" style="left:0;top:0" width="1913" height="900" viewBox="0 0 1913 900"><path d="M1818 873.5 l6 -6.5 l6 6.5" fill="none" stroke="#fff" stroke-width="1.6"/></svg>
<div class="a" style="left:1868px;top:118px;width:25px;height:720px;background:#eeeeee"></div>
<div class="a" style="left:1893px;top:118px;width:20px;height:782px;background:#f0f0f0"></div>
<div class="a" style="left:1895px;top:139px;width:17px;height:410px;background:#c4c4c4"></div>
<svg class="i" style="left:0;top:0" width="1913" height="900" viewBox="0 0 1913 900"><path d="M1899 132.5 L1903.5 127 L1908 132.5 Z" fill="#a0a0a0"/><path d="M1899 823.5 L1903.5 829 L1908 823.5 Z" fill="#505050"/></svg>
<div class="a" style="left:1870px;top:307px;width:43px;height:46px;background:#fff;box-shadow:-4px 0 12px rgba(0,0,0,0.10)"></div>
<div class="a" style="left:1870px;top:358px;width:43px;height:45px;background:#ff7733;box-shadow:-4px 0 12px rgba(0,0,0,0.10)"></div>
<svg class="i" style="left:0;top:0" width="1913" height="900" viewBox="0 0 1913 900" fill="none" stroke-linecap="round" stroke-linejoin="round">
<path d="M1887.5 336 L1894.6 329.6 A1.9 1.9 0 0 1 1897.3 332.3 L1889.6 340 A3.6 3.6 0 0 1 1884.5 334.9 L1895.8 323.2 A3.7 3.7 0 0 1 1901 328.5 L1900.3 329.2" stroke="#333" stroke-width="1.25"/>
<rect x="1880.8" y="369.5" width="24" height="24" rx="2.5" stroke="#fff" stroke-width="1.7"/>
<path d="M1894.8 380.6 L1901.3 374.1 M1896.3 373.8 h5.2 v5.2 M1890.8 384 L1884.6 390.2 M1884.4 384.6 v5.8 h5.8" stroke="#fff" stroke-width="1.7"/>
</svg>
<div class="a" style="left:1587px;top:796px;font-size:24px;line-height:30px;color:rgba(140,140,140,0.55)">激活 <span style="letter-spacing:1.7px">Windows</span></div>
<div class="a" style="left:1587px;top:829px;font-size:16px;line-height:20px;color:rgba(140,140,140,0.55);letter-spacing:1.65px">转到“设置”以激活 Windows。</div>
</body></html>
